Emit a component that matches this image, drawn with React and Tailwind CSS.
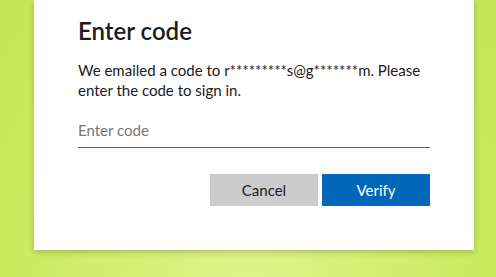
export default function App() {
  return (
    <div className="w-[496px] h-[277px] overflow-hidden bg-[radial-gradient(ellipse_at_50%_110%,#e2f58e_0%,#d4ef72_35%,#c9ea5e_70%,#c4e658_100%)] font-['Lato','Liberation_Sans',sans-serif]">
      <div className="ml-[34px] w-[440px] h-[250px] bg-white shadow-[0_2px_6px_rgba(0,0,0,0.22)] px-[44px] pt-[15px]">
        <h1 className="text-[24px] leading-[32px] font-semibold text-[#1b1b1b]">Enter code</h1>
        <p className="mt-[13px] text-[15px] leading-[20px] text-[#1b1b1b]">
          We emailed a code to r*********s@g*******m. Please enter the code to sign in.
        </p>
        <div className="mt-[20px] border-b border-[#666666] pb-[7px]">
          <input
            className="block w-full outline-none text-[15px] leading-[20px] h-[20px] placeholder:text-[#767676] text-[#1b1b1b]"
            placeholder="Enter code"
          />
        </div>
        <div className="mt-[26px] flex justify-end gap-[4px]">
          <button className="w-[108px] h-[32px] bg-[#cccccc] text-[15px] text-[#1b1b1b]">Cancel</button>
          <button className="w-[108px] h-[32px] bg-[#0067b8] text-[15px] text-white">Verify</button>
        </div>
      </div>
    </div>
  );
}
